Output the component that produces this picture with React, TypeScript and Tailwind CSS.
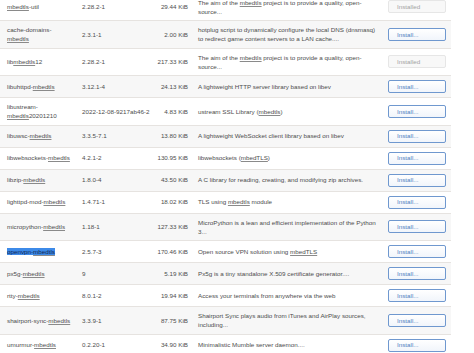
import React from "react";

type Row = {
  name: React.ReactNode;
  version: string;
  size: string;
  desc: React.ReactNode;
  installed?: boolean;
};

const M = ({ t = "mbedtls" }: { t?: string }) => (
  <span className="underline decoration-[#8a8a8a] underline-offset-[1px]">{t}</span>
);

const rows: Row[] = [
  {
    name: (<><M />-util</>),
    version: "2.28.2-1",
    size: "29.44 KiB",
    desc: (<>The aim of the <M /> project is to provide a quality, open-source...</>),
    installed: true,
  },
  {
    name: (<>cache-domains-<M /></>),
    version: "2.3.1-1",
    size: "2.00 KiB",
    desc: "hotplug script to dynamically configure the local DNS (dnsmasq) to redirect game content servers to a LAN cache....",
  },
  {
    name: (<>lib<M />12</>),
    version: "2.28.2-1",
    size: "217.33 KiB",
    desc: (<>The aim of the <M /> project is to provide a quality, open-source...</>),
    installed: true,
  },
  {
    name: (<>libuhttpd-<M /></>),
    version: "3.12.1-4",
    size: "24.13 KiB",
    desc: "A lightweight HTTP server library based on libev",
  },
  {
    name: (<>libustream-<M />20201210</>),
    version: "2022-12-08-9217ab46-2",
    size: "4.83 KiB",
    desc: (<>ustream SSL Library (<M />)</>),
  },
  {
    name: (<>libuwsc-<M /></>),
    version: "3.3.5-7.1",
    size: "13.80 KiB",
    desc: "A lightweight WebSocket client library based on libev",
  },
  {
    name: (<>libwebsockets-<M /></>),
    version: "4.2.1-2",
    size: "130.95 KiB",
    desc: (<>libwebsockets (<M t="mbedTLS" />)</>),
  },
  {
    name: (<>libzip-<M /></>),
    version: "1.8.0-4",
    size: "43.50 KiB",
    desc: "A C library for reading, creating, and modifying zip archives.",
  },
  {
    name: (<>lighttpd-mod-<M /></>),
    version: "1.4.71-1",
    size: "18.02 KiB",
    desc: (<>TLS using <M /> module</>),
  },
  {
    name: (<>micropython-<M /></>),
    version: "1.18-1",
    size: "127.33 KiB",
    desc: "MicroPython is a lean and efficient implementation of the Python 3...",
  },
  {
    name: (
      <span className="bg-[#3d8ae8] text-[#10244f]">
        openvpn-<M />
      </span>
    ),
    version: "2.5.7-3",
    size: "170.46 KiB",
    desc: (<>Open source VPN solution using <M t="mbedTLS" /></>),
  },
  {
    name: (<>px5g-<M /></>),
    version: "9",
    size: "5.19 KiB",
    desc: "Px5g is a tiny standalone X.509 certificate generator....",
  },
  {
    name: (<>rtty-<M /></>),
    version: "8.0.1-2",
    size: "19.94 KiB",
    desc: "Access your terminals from anywhere via the web",
  },
  {
    name: (<>shairport-sync-<M /></>),
    version: "3.3.9-1",
    size: "87.75 KiB",
    desc: "Shairport Sync plays audio from iTunes and AirPlay sources, including...",
  },
  {
    name: (<>umurmur-<M /></>),
    version: "0.2.20-1",
    size: "34.90 KiB",
    desc: "Minimalistic Mumble server daemon....",
  },
];

export default function App() {
  return (
    <div className="w-[474px] h-[353px] overflow-hidden bg-white font-['Liberation_Sans',Arial,sans-serif] text-[6.25px] leading-[9.25px] text-[#4d4d4d]">
      <div className="w-[451px] mt-[-7.5px]">
        {rows.map((r, i) => (
          <div
            key={i}
            className={
              i % 2 === 1
                ? "flex items-center border-t border-[#e6e3e0] py-[4px] bg-[#f7f7f7]"
                : "flex items-center border-t border-[#e6e3e0] py-[4px] bg-white"
            }
          >
            <div className="w-[82px] shrink-0 pl-[7px] pr-[10px]">{r.name}</div>
            <div className="w-[68px] shrink-0">{r.version}</div>
            <div className="w-[38px] shrink-0 text-right whitespace-nowrap">{r.size}</div>
            <div className="w-[193px] shrink-0 pl-[10px]">{r.desc}</div>
            <div className="w-[70px] shrink-0 pl-[7px]">
              {r.installed ? (
                <div className="w-[58px] h-[13px] flex items-center pl-[8px] rounded-[2px] border border-[#e6e6e6] bg-[#f8f8f8] text-[#a3a3a3]">
                  Installed
                </div>
              ) : (
                <div className="w-[58px] h-[13px] flex items-center pl-[8px] rounded-[2px] border border-[#6f98cf] bg-gradient-to-b from-white to-[#f1f5fb] text-[#4f7fbf]">
                  Install...
                </div>
              )}
            </div>
          </div>
        ))}
      </div>
    </div>
  );
}
